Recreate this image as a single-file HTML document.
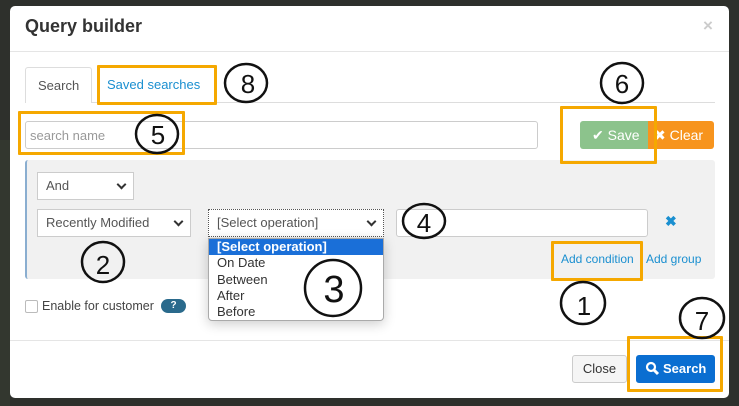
<!DOCTYPE html>
<html><head><style>
*{box-sizing:border-box;margin:0;padding:0}
body{width:739px;height:406px;background:#2e302c;font-family:"Liberation Sans",sans-serif;position:relative;overflow:hidden;font-size:12px;color:#333}
.a{position:absolute}
.modal{left:10px;top:6px;width:719px;height:392px;background:#fff;border-radius:5px}
.sel{background:#fff;border:1px solid #ccc;color:#555;font-size:13px;padding:5px 8px;line-height:16px}
.sel:after{content:"";position:absolute;right:8px;top:8px;width:5px;height:5px;border-right:2px solid #333;border-bottom:2px solid #333;transform:rotate(45deg)}
.ob{border:3px solid #f5a800;border-radius:1px;z-index:5}
.link{color:#1a8fd0}
</style></head><body>
<div class="a" style="left:0;top:140px;width:10px;height:266px;background:#33372f"></div>
<div class="a modal"></div>
<div class="a" style="left:25px;top:16px;font-size:18px;font-weight:bold;color:#333">Query builder</div>
<div class="a" style="left:703px;top:16px;font-size:17px;font-weight:bold;color:#ccc">×</div>
<div class="a" style="left:10px;top:51px;width:719px;height:1px;background:#e5e5e5"></div>
<div class="a" style="left:25px;top:102px;width:690px;height:1px;background:#ddd"></div>
<div class="a" style="left:25px;top:67px;width:67px;height:36px;border:1px solid #ddd;border-bottom:none;background:#fff;border-radius:3px 3px 0 0;font-size:13px;color:#555;padding:10px 0 0 12px">Search</div>
<div class="a link" style="left:107px;top:77px;font-size:13px">Saved searches</div>
<div class="a" style="left:25px;top:121px;width:513px;height:28px;border:1px solid #ccc;border-radius:3px;color:#999;font-size:13px;padding:6px 4px">search name</div>
<div class="a" style="left:580px;top:121px;width:69px;height:28px;background:#8cc38c;border-radius:3px 0 0 3px;color:#fff;font-size:14px;padding:6px 0 0 12px">✔ Save</div>
<div class="a" style="left:648px;top:121px;width:66px;height:28px;background:#f7941d;border-radius:0 3px 3px 0;color:#fff;font-size:14px;padding:6px 0 0 6px">✖ Clear</div>
<div class="a" style="left:25px;top:160px;width:690px;height:119px;background:#f1f1f1;border-left:2px solid #8aaed0;border-radius:3px"></div>
<div class="a sel" style="left:37px;top:172px;width:97px;height:28px">And</div>
<div class="a sel" style="left:37px;top:209px;width:154px;height:28px">Recently Modified</div>
<div class="a sel" style="left:208px;top:209px;width:176px;height:28px;border:1px dotted #555">[Select operation]</div>
<div class="a" style="left:396px;top:209px;width:252px;height:28px;background:#fff;border:1px solid #ccc;border-radius:3px"></div>
<div class="a" style="left:665px;top:213px;font-size:14px;font-weight:bold;color:#1a8fd0">✖</div>
<div class="a link" style="left:561px;top:252px">Add condition</div>
<div class="a link" style="left:646px;top:252px">Add group</div>
<div class="a" style="left:208px;top:238px;width:176px;height:83px;background:#fff;border:1px solid #aaa;border-radius:0 0 4px 4px;box-shadow:0 3px 12px rgba(0,0,0,.2);font-size:13px;line-height:16.3px;color:#333">
<div style="background:#1a6fd8;color:#fff;font-weight:bold;padding-left:8px">[Select operation]</div>
<div style="padding-left:8px">On Date</div><div style="padding-left:8px">Between</div><div style="padding-left:8px">After</div><div style="padding-left:8px">Before</div></div>
<div class="a" style="left:25px;top:300px;width:13px;height:13px;border:1px solid #bbb;border-radius:2px"></div>
<div class="a" style="left:42px;top:299px;font-size:12.5px;color:#444">Enable for customer</div>
<div class="a" style="left:161px;top:299px;width:25px;height:14px;background:#2a6a8c;border-radius:7px;color:#fff;font-size:10px;font-weight:bold;text-align:center;line-height:14px">?</div>
<div class="a" style="left:10px;top:340px;width:719px;height:1px;background:#e5e5e5"></div>
<div class="a" style="left:572px;top:355px;width:55px;height:28px;border:1px solid #ccc;border-radius:3px;background:#f5f5f5;font-size:13px;color:#333;text-align:center;line-height:26px">Close</div>
<div class="a" style="left:636px;top:355px;width:79px;height:28px;border-radius:3px;background:#0a6ed1;font-size:13px;color:#fff;font-weight:bold;line-height:28px;padding-left:27px">Search</div>
<svg class="a" style="left:645px;top:361px" width="16" height="16" fill="none" stroke="#fff" stroke-width="2.2"><circle cx="6" cy="6" r="4"/><path d="M9 9l4 4" stroke-width="3"/></svg>
<div class="a ob" style="left:97px;top:65px;width:120px;height:40px"></div>
<div class="a ob" style="left:18px;top:111px;width:167px;height:44px"></div>
<div class="a ob" style="left:560px;top:106px;width:97px;height:58px"></div>
<div class="a ob" style="left:551px;top:241px;width:92px;height:40px"></div>
<div class="a ob" style="left:627px;top:336px;width:96px;height:56px"></div>
<svg class="a" style="left:0;top:0;z-index:6" width="739" height="406" font-family="Liberation Sans" fill="none" stroke="#111" stroke-width="2.5">
<g font-size="26" fill="#111" stroke="none" text-anchor="middle">
<text x="248" y="93">8</text><text x="622" y="93">6</text><text x="158" y="144">5</text>
<text x="103" y="274">2</text><text x="334" y="302" font-size="38">3</text><text x="424" y="232">4</text>
<text x="584" y="315">1</text><text x="702" y="330">7</text></g>
<ellipse cx="246" cy="83" rx="21" ry="19"/><ellipse cx="622" cy="83" rx="21" ry="20"/>
<ellipse cx="157" cy="134" rx="21" ry="19"/><ellipse cx="103" cy="262" rx="21" ry="20"/>
<ellipse cx="333" cy="288" rx="28" ry="28"/><ellipse cx="424" cy="221" rx="21" ry="17"/>
<ellipse cx="583" cy="303" rx="22" ry="21"/><ellipse cx="702" cy="318" rx="22" ry="20"/>
</svg>
</body></html>
